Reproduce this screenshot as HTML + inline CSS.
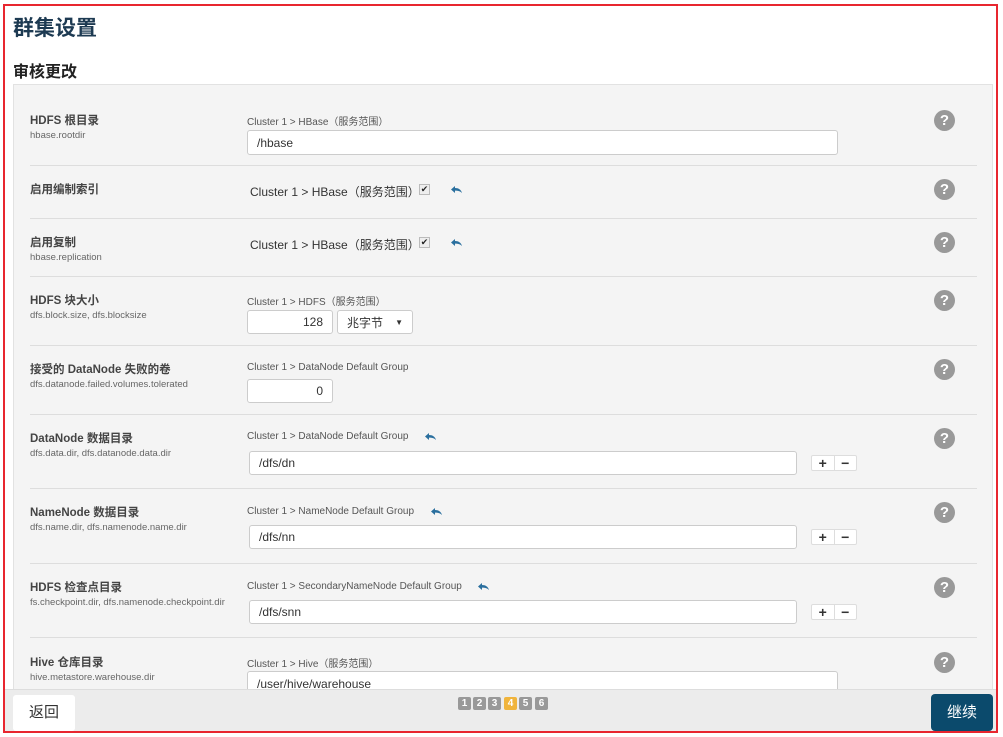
<!DOCTYPE html>
<html><head><meta charset="utf-8"><style>
*{box-sizing:border-box;margin:0;padding:0}
body{width:1003px;height:737px;background:#fff;font-family:"Liberation Sans","Noto Sans CJK SC",sans-serif;position:relative;overflow:hidden;color:#333}
.a{position:absolute}
.frame{left:3px;top:4px;width:995px;height:729px;border:2px solid #e8262f;z-index:10;pointer-events:none}
.h1{left:13px;top:12px;font-size:21px;font-weight:bold;color:#1d3a52}
.h2{left:13px;top:58px;font-size:16px;font-weight:bold;color:#222}
.panel{left:13px;top:84px;width:980px;height:620px;background:#f4f4f4;border:1px solid #e2e2e2}
.sep{left:30px;width:947px;height:1px;background:#ddd}
.lb{left:30px;font-size:11.5px;font-weight:bold;color:#444}
.sb{left:30px;font-size:9.5px;color:#666}
.sc{font-size:10px;color:#555}
.sc2{font-size:12px;color:#333}
.in{background:#fff;border:1px solid #ccc;border-radius:3px;font-size:12px;color:#333;padding:0 9px;display:flex;align-items:center}
.q{width:21px;height:21px;border-radius:50%;background:#999;color:#fff;font-weight:bold;font-size:15px;text-align:center;line-height:21px;left:934px}
.ar{width:11px;height:8px}
.cb{width:11px;height:11px;border:1px solid #bbb;background:#eee;font-size:9px;line-height:9px;text-align:center;color:#222}
.pm{width:46px;height:16px;background:#fff;border:1px solid #ddd;border-radius:2px;display:flex;font-weight:bold;font-size:14px;line-height:14px}
.pm span{flex:1;text-align:center}
.pm span+span{border-left:1px solid #ddd}
.footer{left:5px;top:689px;width:991px;height:42px;background:#ececec;border-top:1px solid #ddd}
.pg{top:697px;width:13px;height:13px;background:#999;color:#fff;font-size:10px;font-weight:bold;text-align:center;line-height:13px;border-radius:2px}
</style></head><body>
<svg width="0" height="0" style="position:absolute"><defs><symbol id="back" viewBox="0 0 11 8"><path d="M0 3.5 L4 0 L4 2 C7.5 2 10 3.5 11 7 C9 5 7 4.6 4 4.6 L4 7 Z" fill="#2a6f9e"/></symbol></defs></svg>
<div class="a frame"></div>
<div class="a h1">群集设置</div>
<div class="a h2">审核更改</div>
<div class="a panel"></div>

<div class="a sep" style="top:165px"></div>
<div class="a sep" style="top:218px"></div>
<div class="a sep" style="top:276px"></div>
<div class="a sep" style="top:345px"></div>
<div class="a sep" style="top:414px"></div>
<div class="a sep" style="top:488px"></div>
<div class="a sep" style="top:563px"></div>
<div class="a sep" style="top:637px"></div>

<div class="a lb" style="top:112px">HDFS 根目录</div>
<div class="a sb" style="top:130px">hbase.rootdir</div>
<div class="a sc" style="left:247px;top:113px">Cluster 1 &gt; HBase（服务范围）</div>
<div class="a in" style="left:247px;top:130px;width:591px;height:25px">/hbase</div>
<div class="a q" style="top:110px">?</div>

<div class="a lb" style="top:181px">启用编制索引</div>
<div class="a sc2" style="left:250px;top:183px">Cluster 1 &gt; HBase（服务范围）</div>
<div class="a cb" style="left:419px;top:184px">✔</div>
<svg class="a ar" style="left:451px;top:186px"><use href="#back"/></svg>
<div class="a q" style="top:179px">?</div>

<div class="a lb" style="top:234px">启用复制</div>
<div class="a sb" style="top:252px">hbase.replication</div>
<div class="a sc2" style="left:250px;top:236px">Cluster 1 &gt; HBase（服务范围）</div>
<div class="a cb" style="left:419px;top:237px">✔</div>
<svg class="a ar" style="left:451px;top:239px"><use href="#back"/></svg>
<div class="a q" style="top:232px">?</div>

<div class="a lb" style="top:292px">HDFS 块大小</div>
<div class="a sb" style="top:310px">dfs.block.size, dfs.blocksize</div>
<div class="a sc" style="left:247px;top:293px">Cluster 1 &gt; HDFS（服务范围）</div>
<div class="a in" style="left:247px;top:310px;width:86px;height:24px;justify-content:flex-end">128</div>
<div class="a in" style="left:337px;top:310px;width:76px;height:24px;justify-content:space-between">兆字节<span style="font-size:8px">▼</span></div>
<div class="a q" style="top:290px">?</div>

<div class="a lb" style="top:361px">接受的 DataNode 失败的卷</div>
<div class="a sb" style="top:379px">dfs.datanode.failed.volumes.tolerated</div>
<div class="a sc" style="left:247px;top:362px">Cluster 1 &gt; DataNode Default Group</div>
<div class="a in" style="left:247px;top:379px;width:86px;height:24px;justify-content:flex-end">0</div>
<div class="a q" style="top:359px">?</div>

<div class="a lb" style="top:430px">DataNode 数据目录</div>
<div class="a sb" style="top:448px">dfs.data.dir, dfs.datanode.data.dir</div>
<div class="a sc" style="left:247px;top:431px">Cluster 1 &gt; DataNode Default Group</div>
<svg class="a ar" style="left:425px;top:433px"><use href="#back"/></svg>
<div class="a in" style="left:249px;top:451px;width:548px;height:24px">/dfs/dn</div>
<div class="a pm" style="left:811px;top:455px"><span>+</span><span>−</span></div>
<div class="a q" style="top:428px">?</div>

<div class="a lb" style="top:504px">NameNode 数据目录</div>
<div class="a sb" style="top:522px">dfs.name.dir, dfs.namenode.name.dir</div>
<div class="a sc" style="left:247px;top:506px">Cluster 1 &gt; NameNode Default Group</div>
<svg class="a ar" style="left:431px;top:508px"><use href="#back"/></svg>
<div class="a in" style="left:249px;top:525px;width:548px;height:24px">/dfs/nn</div>
<div class="a pm" style="left:811px;top:529px"><span>+</span><span>−</span></div>
<div class="a q" style="top:502px">?</div>

<div class="a lb" style="top:579px">HDFS 检查点目录</div>
<div class="a sb" style="top:597px">fs.checkpoint.dir, dfs.namenode.checkpoint.dir</div>
<div class="a sc" style="left:247px;top:581px">Cluster 1 &gt; SecondaryNameNode Default Group</div>
<svg class="a ar" style="left:478px;top:583px"><use href="#back"/></svg>
<div class="a in" style="left:249px;top:600px;width:548px;height:24px">/dfs/snn</div>
<div class="a pm" style="left:811px;top:604px"><span>+</span><span>−</span></div>
<div class="a q" style="top:577px">?</div>

<div class="a lb" style="top:654px">Hive 仓库目录</div>
<div class="a sb" style="top:672px">hive.metastore.warehouse.dir</div>
<div class="a sc" style="left:247px;top:655px">Cluster 1 &gt; Hive（服务范围）</div>
<div class="a in" style="left:247px;top:671px;width:591px;height:25px;align-items:flex-start;padding-top:5px">/user/hive/warehouse</div>
<div class="a q" style="top:652px">?</div>

<div class="a footer"></div>
<div class="a" style="left:13px;top:695px;width:62px;height:36px;background:#fff;border-radius:3px;font-size:15px;line-height:36px;text-align:center;color:#333">返回</div>
<div class="a pg" style="left:458px">1</div>
<div class="a pg" style="left:473px">2</div>
<div class="a pg" style="left:488px">3</div>
<div class="a pg" style="left:504px;background:#f0b43c">4</div>
<div class="a pg" style="left:519px">5</div>
<div class="a pg" style="left:535px">6</div>
<div class="a" style="left:931px;top:694px;width:62px;height:37px;background:#0b4a6c;border-radius:4px;color:#fff;font-size:15px;line-height:37px;text-align:center">继续</div>
</body></html>
